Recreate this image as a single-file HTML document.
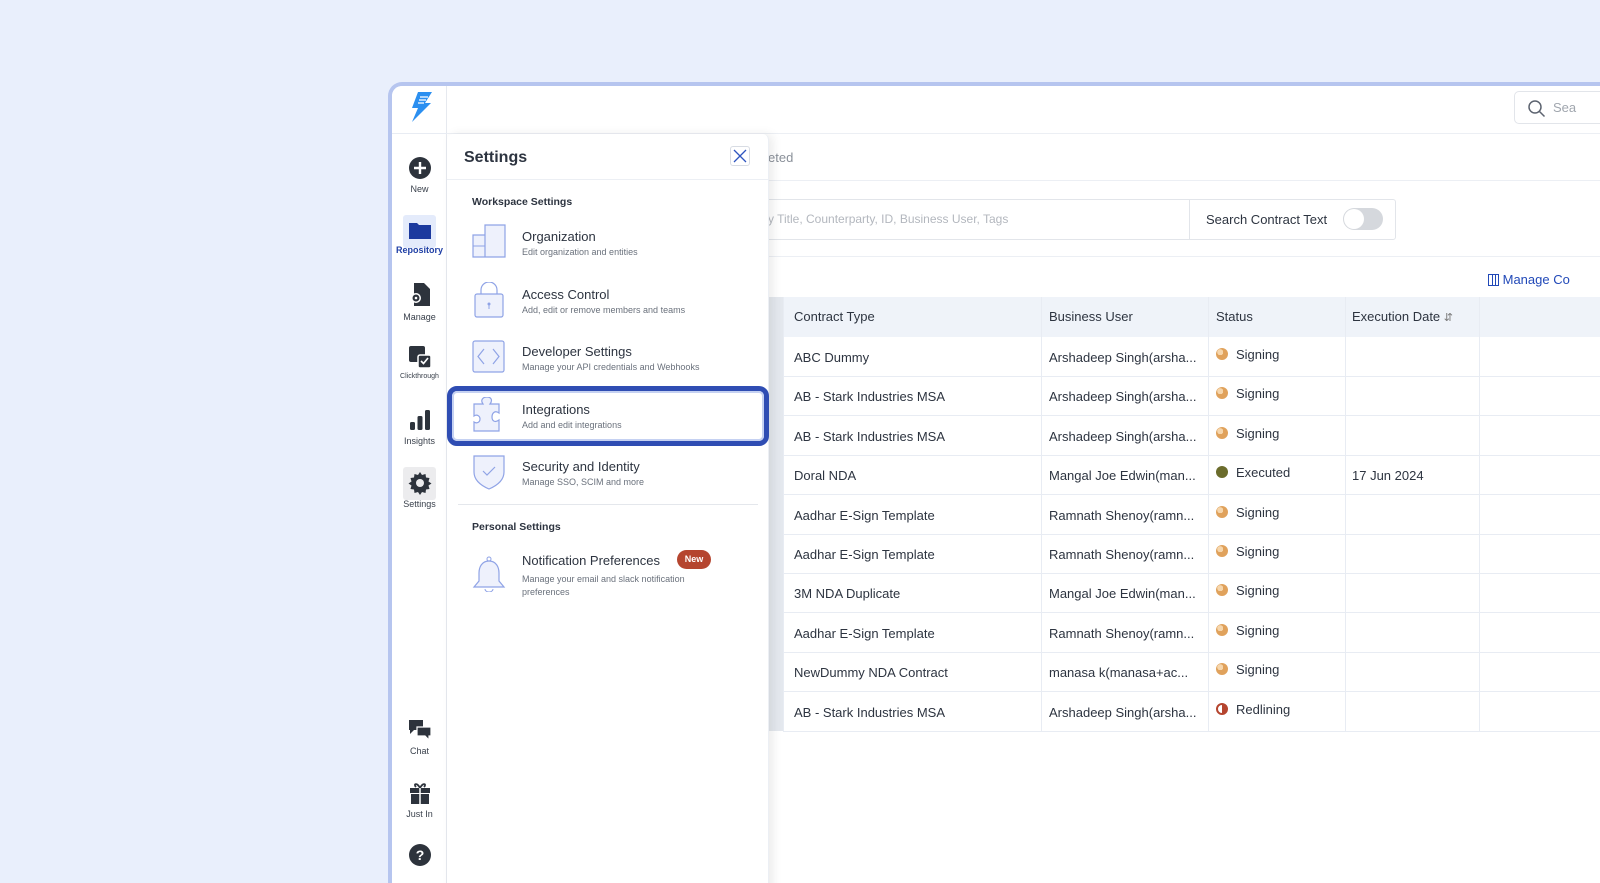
<!DOCTYPE html>
<html style="overflow:hidden;height:883px"><head><meta charset="utf-8"><style>
*{box-sizing:border-box;margin:0;padding:0}
body{width:1600px;height:883px;overflow:hidden;background:#e9effc;font-family:"Liberation Sans",sans-serif;color:#2d3440;position:relative}
.abs{position:absolute}
.frame{left:388px;top:82px;width:1212px;height:801px;border:4px solid #b6c5ef;border-right:none;border-bottom:none;border-radius:14px 0 0 0;background:#fff;overflow:hidden}
.side{left:0;top:0;width:55px;height:100%;border-right:1px solid #e6e9ef;background:#fff}
.nav{position:absolute;left:0;width:55px;text-align:center;font-size:9px;color:#3a414c}
.nav svg{display:block;margin:0 auto 4px}
.t{font-size:13px;color:#2d3440;white-space:nowrap}
.cell{position:absolute;font-size:13px;white-space:nowrap;color:#2d3440}
.hline{position:absolute;height:1px;background:#e8ecf3}
.vline{position:absolute;width:1px;background:#e8ecf3}
.dot{display:inline-block;width:12px;height:12px;border-radius:50%;vertical-align:-1px;margin-right:8px}
.item{position:absolute;left:0;width:320px}
.item .ttl{position:absolute;left:75px;font-size:13px;color:#2d3440}
.item .sub{position:absolute;left:75px;font-size:9px;color:#6a717c}
</style></head><body>
<div class="abs frame">
 <div class="abs side">
  <svg class="abs" style="left:17px;top:6px" width="24" height="30" viewBox="0 0 24 30"><path d="M9 0h14l-7 11h6L3 30l6-14H3z" fill="#2b8ff0"/><path d="M11 5h8M10 8h7M9 11h6" stroke="#fff" stroke-width="1.2"/></svg>
  <div class="hline" style="left:0;top:47px;width:55px"></div>
  <div class="nav" style="top:70px"><svg width="24" height="24" viewBox="0 0 24 24"><circle cx="12" cy="12" r="11" fill="#2d333c"/><path d="M12 6v12M6 12h12" stroke="#fff" stroke-width="2.4"/></svg>New</div>
  <div class="abs" style="left:11px;top:129px;width:33px;height:33px;background:#e4ebfb;border-radius:3px"></div>
  <div class="nav" style="top:135px;color:#1f3fa5;font-weight:bold"><svg width="24" height="20" viewBox="0 0 24 20"><path d="M1 2h8l2 2h12v14H1z" fill="#1c3a9e"/></svg>Repository</div>
  <div class="nav" style="top:196px"><svg width="24" height="26" viewBox="0 0 24 26"><path d="M6 1h10l6 6v17H6z" fill="#2d333c"/><circle cx="8" cy="16" r="5" fill="#fff"/><circle cx="8" cy="16" r="3.5" fill="#2d333c"/><circle cx="8" cy="16" r="1.3" fill="#fff"/></svg>Manage</div>
  <div class="nav" style="top:259px;font-size:7px"><svg width="24" height="24" viewBox="0 0 24 24"><rect x="1" y="1" width="16" height="16" rx="2" fill="#2d333c"/><rect x="10" y="10" width="13" height="13" rx="2" fill="#2d333c" stroke="#fff" stroke-width="1.5"/><path d="M13 16l2.5 2.5L20 13" stroke="#fff" stroke-width="1.6" fill="none"/></svg>Clickthrough</div>
  <div class="nav" style="top:322px"><svg width="24" height="24" viewBox="0 0 24 24"><rect x="2" y="14" width="5" height="8" rx="1.5" fill="#2d333c"/><rect x="9.5" y="8" width="5" height="14" rx="1.5" fill="#2d333c"/><rect x="17" y="2" width="5" height="20" rx="1.5" fill="#2d333c"/></svg>Insights</div>
  <div class="abs" style="left:11px;top:381px;width:33px;height:33px;background:#ececee;border-radius:3px"></div>
  <div class="nav" style="top:385px"><svg width="24" height="24" viewBox="0 0 24 24"><path d="M12 1l2 3 3.5-1 .5 3.5 3.5.5-1 3.5 3 2-3 2 1 3.5-3.5.5-.5 3.5-3.5-1-2 3-2-3-3.5 1-.5-3.5-3.5-.5 1-3.5-3-2 3-2-1-3.5 3.5-.5.5-3.5 3.5 1z" fill="#2d333c"/><circle cx="12" cy="12" r="4" fill="#ececee"/></svg>Settings</div>
  <div class="nav" style="top:632px"><svg width="24" height="24" viewBox="0 0 24 24"><path d="M1 2h14v10H6l-4 4v-4H1z" fill="#2d333c"/><path d="M9 9h14v9h-2v4l-4-4H9z" fill="#2d333c" stroke="#fff" stroke-width="1.2"/></svg>Chat</div>
  <div class="nav" style="top:695px"><svg width="24" height="24" viewBox="0 0 24 24"><path d="M12 7C9 1 5 3 8 6M12 7c3-6 7-4 4-1" stroke="#2d333c" stroke-width="1.8" fill="none"/><rect x="2" y="7" width="20" height="5" fill="#2d333c"/><rect x="3" y="13" width="18" height="10" fill="#2d333c"/><path d="M12 7v16" stroke="#fff" stroke-width="1.5"/></svg>Just In</div>
  <div class="nav" style="top:757px"><svg width="24" height="24" viewBox="0 0 24 24"><circle cx="12" cy="12" r="11" fill="#2d333c"/><text x="12" y="17" text-anchor="middle" font-size="14" font-weight="bold" fill="#fff" font-family="Liberation Sans">?</text></svg></div>
 </div>
 <div class="hline" style="left:55px;top:47px;width:1200px;background:#eceff4"></div>
 <div class="abs" style="left:1122px;top:5px;width:120px;height:33px;border:1px solid #e2e5ea;border-radius:5px"><svg class="abs" style="left:12px;top:7px" width="20" height="20" viewBox="0 0 20 20"><circle cx="8" cy="8" r="6" stroke="#5d6470" stroke-width="1.5" fill="none"/><path d="M12.5 12.5l5 5" stroke="#5d6470" stroke-width="1.5"/></svg><span class="abs" style="left:38px;top:8px;font-size:13px;color:#a0a6ae">Sea</span></div>
 <div class="abs t" style="left:376px;top:64px;color:#8a9099">eted</div>
 <div class="hline" style="left:376px;top:94px;width:900px;background:#eceff4"></div>
 <div class="abs" style="left:360px;top:113px;width:644px;height:41px;border:1px solid #e2e5ea;border-radius:3px"></div>
 <div class="abs" style="left:376px;top:126px;font-size:12px;color:#b3b7be">y Title, Counterparty, ID, Business User, Tags</div>
 <div class="vline" style="left:797px;top:114px;height:40px;background:#e2e5ea"></div>
 <div class="abs t" style="left:814px;top:126px">Search Contract Text</div>
 <div class="abs" style="left:951px;top:122px;width:40px;height:22px;border-radius:11px;background:#d5d8dd"><div class="abs" style="left:1px;top:1px;width:20px;height:20px;border-radius:50%;background:#fff"></div></div>
 <div class="hline" style="left:376px;top:170px;width:900px;background:#eceff4"></div>
 <div class="abs" style="left:1096px;top:186px;font-size:13px;color:#2149b8"><span style="display:inline-block;width:11px;height:12px;border:1px solid #2149b8;vertical-align:-2px;background:linear-gradient(90deg,transparent 3px,#2149b8 3px,#2149b8 4px,transparent 4px,transparent 6px,#2149b8 6px,#2149b8 7px,transparent 7px)"></span> Manage Co</div>
 <div class="abs" style="left:376px;top:211px;width:900px;height:40px;background:#eff3f9"></div>
 <div class="abs" style="left:376px;top:211px;width:15px;height:434px;background:#e4e8ee"></div>
 <div class="cell" style="left:402px;top:223px">Contract Type</div>
 <div class="cell" style="left:657px;top:223px">Business User</div>
 <div class="cell" style="left:824px;top:223px">Status</div>
 <div class="cell" style="left:960px;top:223px">Execution Date <span style="color:#777;font-size:11px">&#8693;</span></div>
 <div class="vline" style="left:391px;top:211px;height:434px"></div>
 <div class="vline" style="left:649px;top:211px;height:434px"></div>
 <div class="vline" style="left:816px;top:211px;height:434px"></div>
 <div class="vline" style="left:953px;top:211px;height:434px"></div>
 <div class="vline" style="left:1087px;top:211px;height:434px"></div>
 <div id="rows"></div>
 <div class="abs" style="left:55px;top:48px;width:322px;height:760px;background:#fff;border-radius:6px 6px 0 0;box-shadow:4px 0 10px rgba(0,0,0,.08);border-right:1px solid #eceff4">
  <div class="abs" style="left:17px;top:15px;font-size:16px;font-weight:bold;color:#2d3440">Settings</div>
  <div class="abs" style="left:283px;top:12px;width:20px;height:20px;border:1px solid #d8dce3;border-radius:3px"><svg width="18" height="18" viewBox="0 0 18 18"><path d="M3 3l12 12M15 3L3 15" stroke="#2f55c0" stroke-width="1.3"/></svg></div>
  <div class="hline" style="left:0;top:45px;width:322px;background:#eceff4"></div>
  <div class="abs" style="left:25px;top:62px;font-size:10.5px;font-weight:bold;color:#2d3440">Workspace Settings</div>
  <div class="item" style="top:90px"><svg class="abs" style="left:25px;top:0" width="34" height="34" viewBox="0 0 34 34"><path d="M1 11h12v22H1zM13 1h20v32H13z" fill="#eef1fc" stroke="#8fa3e6" stroke-width="1.2"/><path d="M1 22h12" stroke="#8fa3e6"/></svg><div class="ttl" style="top:5px">Organization</div><div class="sub" style="top:23px">Edit organization and entities</div></div>
  <div class="item" style="top:148px"><svg class="abs" style="left:25px;top:0" width="34" height="36" viewBox="0 0 34 36"><path d="M9 12V8a8 8 0 0116 0v4" stroke="#8fa3e6" fill="none" stroke-width="1.2"/><rect x="3" y="12" width="28" height="23" rx="2" fill="#eef1fc" stroke="#8fa3e6" stroke-width="1.2"/><circle cx="17" cy="22" r="1.5" fill="#8fa3e6"/><path d="M17 23v4" stroke="#8fa3e6"/></svg><div class="ttl" style="top:5px">Access Control</div><div class="sub" style="top:23px">Add, edit or remove members and teams</div></div>
  <div class="item" style="top:206px"><svg class="abs" style="left:25px;top:0" width="34" height="34" viewBox="0 0 34 34"><rect x="1" y="1" width="31" height="31" rx="2" fill="#eef1fc" stroke="#8fa3e6" stroke-width="1.2"/><path d="M12 9l-6 7.5 6 7.5M21 9l6 7.5-6 7.5" stroke="#8fa3e6" fill="none" stroke-width="1.2"/></svg><div class="ttl" style="top:4px">Developer Settings</div><div class="sub" style="top:22px">Manage your API credentials and Webhooks</div></div>
  <div class="abs" style="left:0;top:252px;width:322px;height:60px;border:5px solid #2f4db3;border-radius:10px"><div style="position:absolute;inset:0;border:2px solid #c5d1f2;border-radius:5px"></div></div>
  <div class="item" style="top:263px"><svg class="abs" style="left:25px;top:0" width="34" height="36" viewBox="0 0 34 36"><path d="M2 7h9c-3-4 0-7 4-7s6 3 3 7h9v9c-4-3-7 0-7 4s3 6 7 3v11H2v-9c3 2 6 0 6-3s-3-5-6-3z" fill="#eef1fc" stroke="#8fa3e6" stroke-width="1.2"/></svg><div class="ttl" style="top:5px">Integrations</div><div class="sub" style="top:23px">Add and edit integrations</div></div>
  <div class="item" style="top:320px"><svg class="abs" style="left:25px;top:0" width="34" height="36" viewBox="0 0 34 36"><path d="M2 2h30v16c0 9-8 14-15 17C10 32 2 27 2 18z" fill="#eef1fc" stroke="#8fa3e6" stroke-width="1.2"/><path d="M11 17l4 4 8-8" stroke="#8fa3e6" fill="none" stroke-width="1.2"/></svg><div class="ttl" style="top:5px">Security and Identity</div><div class="sub" style="top:23px">Manage SSO, SCIM and more</div></div>
  <div class="hline" style="left:11px;top:370px;width:300px;background:#e4e7ec"></div>
  <div class="abs" style="left:25px;top:387px;font-size:10.5px;font-weight:bold;color:#2d3440">Personal Settings</div>
  <div class="item" style="top:415px"><svg class="abs" style="left:25px;top:7px" width="34" height="36" viewBox="0 0 34 36"><circle cx="17" cy="3" r="2" fill="none" stroke="#8fa3e6"/><path d="M17 5c-7 0-10 6-10 12v8l-5 6h30l-5-6v-8c0-6-3-12-10-12z" fill="#eef1fc" stroke="#8fa3e6" stroke-width="1.2"/><path d="M13 33a4 3 0 008 0" stroke="#8fa3e6" fill="none"/></svg><div class="ttl" style="top:4px">Notification Preferences</div><div class="abs" style="left:230px;top:1px;width:34px;height:19px;border-radius:10px;background:#b5452f;color:#fff;font-size:9px;text-align:center;line-height:19px;font-weight:bold">New</div><div class="sub" style="top:24px;line-height:13px">Manage your email and slack notification<br>preferences</div></div>
 </div>
</div>
<script>
var d=[["ABC Dummy","Arshadeep Singh(arsha...","s","Signing",""],["AB - Stark Industries MSA","Arshadeep Singh(arsha...","s","Signing",""],["AB - Stark Industries MSA","Arshadeep Singh(arsha...","s","Signing",""],["Doral NDA","Mangal Joe Edwin(man...","e","Executed","17 Jun 2024"],["Aadhar E-Sign Template","Ramnath Shenoy(ramn...","s","Signing",""],["Aadhar E-Sign Template","Ramnath Shenoy(ramn...","s","Signing",""],["3M NDA Duplicate","Mangal Joe Edwin(man...","s","Signing",""],["Aadhar E-Sign Template","Ramnath Shenoy(ramn...","s","Signing",""],["NewDummy NDA Contract","manasa k(manasa+ac...","s","Signing",""],["AB - Stark Industries MSA","Arshadeep Singh(arsha...","r","Redlining",""]];
var h="";d.forEach(function(r,i){var y=251+i*39.4;var dot=r[2]=="s"?'<span class="dot" style="background:radial-gradient(circle at 35% 35%,#f6d6ac 0 3px,#e0a25c 3px)"></span>':r[2]=="e"?'<span class="dot" style="background:#6b6c2c"></span>':'<span class="dot" style="background:linear-gradient(90deg,#fff 50%,#b5452f 50%);border:2px solid #b5452f"></span>';
h+='<div class="cell" style="left:402px;top:'+(y+13)+'px">'+r[0]+'</div><div class="cell" style="left:657px;top:'+(y+13)+'px">'+r[1]+'</div><div class="cell" style="left:824px;top:'+(y+10)+'px">'+dot+r[3]+'</div><div class="cell" style="left:960px;top:'+(y+13)+'px">'+r[4]+'</div><div class="hline" style="left:391px;top:'+(y+39)+'px;width:900px"></div>';});
document.getElementById("rows").innerHTML=h;
</script>
</body></html>
